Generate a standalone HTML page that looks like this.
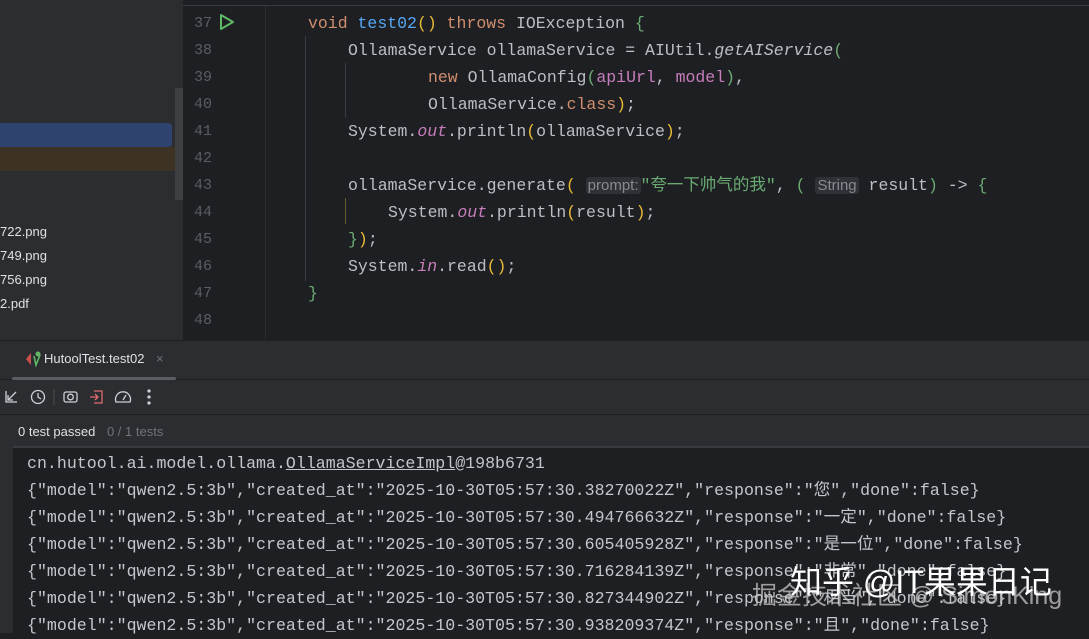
<!DOCTYPE html>
<html><head><meta charset="utf-8"><style>
body{margin:0;width:1089px;height:633px;overflow:hidden;background:#1e1f22;position:relative;font-family:"Liberation Mono","Noto Sans CJK SC",monospace;}
.a{position:absolute;white-space:pre}
.code{font-size:16.5px;color:#bcbec4;line-height:27px}
.ln{font-size:15px;color:#5a5d63;line-height:27px;left:194px}
.k{color:#cf8e6d}.f{color:#56a8f5}.s{color:#6aab73}.p{color:#c77dbb}.i{font-style:italic}.y{color:#e8ba36}.g{color:#6aab73}
.hint{background:#2f3136;color:#868a91;font-family:"Liberation Sans",sans-serif;font-size:15px;border-radius:3px;padding:0 2px}
.cn{font-family:"Liberation Mono","Noto Sans CJK SC",monospace}
.con{font-size:16.6px;color:#c4c6cc;line-height:27px;left:27px}
.sans{font-family:"Liberation Sans","Noto Sans CJK SC",sans-serif}
</style></head><body>
<div class="a" style="left:0;top:0;width:183px;height:340px;background:#2b2d30"></div>
<div class="a" style="left:0;top:123px;width:172px;height:24px;background:#2e436e;border-radius:0 4px 4px 0"></div>
<div class="a" style="left:0;top:147px;width:183px;height:24px;background:#3d3223"></div>
<div class="a" style="left:175px;top:88px;width:8px;height:112px;background:#3d3f43"></div>
<div class="a sans" style="left:0;top:220px;font-size:13px;color:#dfe1e5;line-height:24px">722.png<br>749.png<br>756.png<br>2.pdf</div>
<div class="a" style="left:183px;top:0;width:906px;height:5px;border-bottom:1px solid #393b40;background:#1e1f22"></div>
<div class="a" style="left:265px;top:6px;width:1px;height:334px;background:#2b2d30"></div>
<div class="a" style="left:305px;top:36px;width:1px;height:245px;background:#393b40"></div>
<div class="a" style="left:345px;top:63px;width:1px;height:55px;background:#393b40"></div>
<div class="a" style="left:345px;top:198px;width:1px;height:26px;background:#6b5a2a"></div>
<div class="a ln" style="top:10px">37<br>38<br>39<br>40<br>41<br>42<br>43<br>44<br>45<br>46<br>47<br>48</div>
<svg class="a" style="left:218px;top:13px" width="18" height="18"><path d="M3 2 L15 9 L3 16 Z" fill="none" stroke="#5fb865" stroke-width="2" stroke-linejoin="round"/></svg>
<div class="a code" style="left:308px;top:10px"><span class="k">void</span> <span class="f">test02</span><span class="y">()</span> <span class="k">throws</span> IOException <span class="g">{</span></div>
<div class="a code" style="left:348px;top:37px">OllamaService ollamaService = AIUtil.<span class="i">getAIService</span><span class="g">(</span></div>
<div class="a code" style="left:428px;top:64px"><span class="k">new</span> OllamaConfig<span class="g">(</span><span class="p">apiUrl</span>, <span class="p">model</span><span class="g">)</span>,</div>
<div class="a code" style="left:428px;top:91px">OllamaService.<span class="k">class</span><span class="y">)</span>;</div>
<div class="a code" style="left:348px;top:118px">System.<span class="p i">out</span>.println<span class="y">(</span>ollamaService<span class="y">)</span>;</div>
<div class="a code" style="left:348px;top:172px">ollamaService.generate<span class="y">(</span> <span class="hint">prompt:</span><span class="s cn">"夸一下帅气的我"</span>, <span class="g">(</span> <span class="hint">String</span> result<span class="g">)</span> -&gt; <span class="g">{</span></div>
<div class="a code" style="left:388px;top:199px">System.<span class="p i">out</span>.println<span class="y">(</span>result<span class="y">)</span>;</div>
<div class="a code" style="left:348px;top:226px"><span class="g">}</span><span class="y">)</span>;</div>
<div class="a code" style="left:348px;top:253px">System.<span class="p i">in</span>.read<span class="y">()</span>;</div>
<div class="a code" style="left:308px;top:280px"><span class="g">}</span></div>
<div class="a" style="left:0;top:340px;width:1089px;height:107px;background:#2b2d30;border-top:1px solid #1e1f22"></div>
<div class="a" style="left:0;top:447px;width:13px;height:186px;background:#2b2d30"></div>
<div class="a" style="left:0;top:379px;width:1089px;height:1px;background:#1e1f22"></div>
<div class="a" style="left:12px;top:377px;width:164px;height:3px;background:#5a5d63;border-radius:2px"></div>
<svg class="a" style="left:24px;top:350px" width="18" height="18"><path d="M7 3 L2 9 L7 15 Z" fill="#c94f4f"/><path d="M10 6 L12 15 L16 5" fill="none" stroke="#5fb865" stroke-width="1.6"/><circle cx="14" cy="4" r="2.5" fill="#5fb865"/></svg>
<div class="a sans" style="left:44px;top:351px;font-size:13px;color:#dfe1e5">HutoolTest.test02</div>
<div class="a sans" style="left:156px;top:351px;font-size:13px;color:#6f737a">×</div>
<div class="a" style="left:0;top:414px;width:1089px;height:1px;background:#1e1f22"></div>
<svg class="a" style="left:0;top:386px" width="170" height="22" fill="none" stroke="#ced0d6" stroke-width="1.3">
<path d="M6 5 L6 16 L17 16 M8 14 L16 6 M8 9 L8 14 L13 14"/>
<circle cx="38" cy="11" r="6.5"/><path d="M38 7 L38 11 L41 13"/>
<line x1="54" y1="3" x2="54" y2="19" stroke="#43454a"/>
<rect x="64" y="6" width="13" height="10" rx="2"/><circle cx="70.5" cy="11" r="2.8"/>
<path d="M94 5 L102 5 L102 17 L94 17 M90 11 L98 11 M95 8 L98 11 L95 14" stroke="#e06c6c"/>
<path d="M116 16 A7.5 7.5 0 1 1 130 16 Z M123 14 L126 9"/>
<circle cx="149" cy="5" r="1" fill="#ced0d6"/><circle cx="149" cy="11" r="1" fill="#ced0d6"/><circle cx="149" cy="17" r="1" fill="#ced0d6"/>
</svg>
<div class="a sans" style="left:18px;top:424px;font-size:13px;color:#dfe1e5">0 test passed <span style="color:#6f737a;margin-left:8px">0 / 1 tests</span></div>
<div class="a" style="left:13px;top:446px;width:1076px;height:2px;background:#393b40"></div>
<div class="a con" style="top:450px">cn.hutool.ai.model.ollama.<span style="text-decoration:underline">OllamaServiceImpl</span>@198b6731</div>
<div class="a con cn" style="top:477px">{"model":"qwen2.5:3b","created_at":"2025-10-30T05:57:30.38270022Z","response":"您","done":false}</div>
<div class="a con cn" style="top:504px">{"model":"qwen2.5:3b","created_at":"2025-10-30T05:57:30.494766632Z","response":"一定","done":false}</div>
<div class="a con cn" style="top:531px">{"model":"qwen2.5:3b","created_at":"2025-10-30T05:57:30.605405928Z","response":"是一位","done":false}</div>
<div class="a con cn" style="top:558px">{"model":"qwen2.5:3b","created_at":"2025-10-30T05:57:30.716284139Z","response":"非常","done":false}</div>
<div class="a con cn" style="top:585px">{"model":"qwen2.5:3b","created_at":"2025-10-30T05:57:30.827344902Z","response":"相当","done":false}</div>
<div class="a con cn" style="top:612px">{"model":"qwen2.5:3b","created_at":"2025-10-30T05:57:30.938209374Z","response":"且","done":false}</div>
<div class="a sans" style="left:752px;top:580px;font-size:25px;color:rgba(200,200,200,0.75);line-height:32px">掘金技术社区 @ SimonKing</div>
<div class="a sans" style="left:790px;top:562px;font-size:32px;color:#ffffff;line-height:40px">知乎 @IT果果日记</div>
</body></html>
